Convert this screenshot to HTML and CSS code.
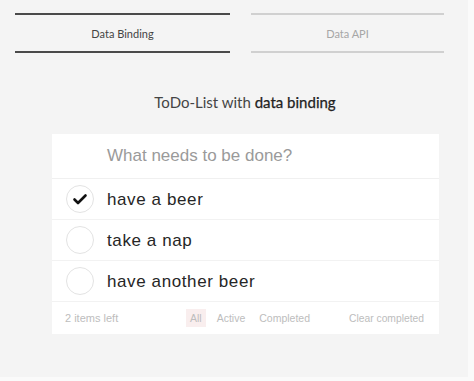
FILE: index.html
```html
<!DOCTYPE html>
<html>
<head>
<meta charset="utf-8">
<link rel="stylesheet" href="styles.css">
</head>
<body>
<div class="page">
  <nav class="tabs">
    <div class="tab tab-active">Data Binding</div>
    <div class="tab tab-inactive">Data API</div>
  </nav>
  <h1 class="title">ToDo-List with <strong>data binding</strong></h1>
  <section class="card">
    <div class="new-row">What needs to be done?</div>
    <ul class="list">
      <li class="item">
        <span class="toggle">
          <svg width="16" height="13" viewBox="0 0 16 13"><path d="M2.5 6.5 L6 10 L13.5 2.5" fill="none" stroke="#111" stroke-width="2.6" stroke-linecap="round" stroke-linejoin="round"/></svg>
        </span>
        <span class="label">have a beer</span>
      </li>
      <li class="item">
        <span class="toggle"></span>
        <span class="label">take a nap</span>
      </li>
      <li class="item">
        <span class="toggle"></span>
        <span class="label">have another beer</span>
      </li>
    </ul>
    <footer class="footer">
      <span class="count">2 items left</span>
      <span class="filters">
        <span class="filter filter-selected">All</span>
        <span class="filter">Active</span>
        <span class="filter">Completed</span>
      </span>
      <span class="clear">Clear completed</span>
    </footer>
  </section>
</div>
</body>
</html>
```

FILE: styles.css
```css
html {
  background: #fafafa;
}
body {
  margin: 0;
  font-family: "Liberation Sans", Arial, sans-serif;
}
.page {
  width: 468px;
  height: 377px;
  background: #f4f4f4;
  box-sizing: border-box;
  padding-top: 13px;
}
.tabs {
  display: flex;
  gap: 21px;
  padding-left: 15px;
}
.tab {
  box-sizing: border-box;
  height: 40px;
  display: flex;
  align-items: center;
  justify-content: center;
  font-family: Lato, sans-serif;
  font-size: 11px;
  padding-top: 1px;
}
.tab-active {
  width: 215px;
  border-top: 2px solid #4a4a4a;
  border-bottom: 2px solid #4a4a4a;
  color: #444;
}
.tab-inactive {
  width: 193px;
  border-top: 2px solid #d0d0d0;
  border-bottom: 2px solid #d0d0d0;
  color: #a6a6a6;
}
.title {
  margin: 0;
  padding-top: 39px;
  height: 42px;
  box-sizing: content-box;
  text-align: center;
  padding-left: 22px;
  font-family: Lato, sans-serif;
  font-weight: 400;
  font-size: 15px;
  line-height: 20px;
  color: #444;
}
.title strong {
  font-weight: 400;
  color: #222;
  -webkit-text-stroke: 0.25px #222;
}
.card {
  margin-left: 52px;
  width: 387px;
  background: #fff;
}
.new-row {
  height: 45px;
  box-sizing: border-box;
  padding-left: 55px;
  display: flex;
  align-items: center;
  font-size: 17px;
  color: #9a9a9a;
  font-weight: 300;
  border-bottom: 1px solid #f0f0f0;
}
.list {
  list-style: none;
  margin: 0;
  padding: 0;
}
.item {
  height: 41px;
  box-sizing: border-box;
  border-bottom: 1px solid #f2f2f2;
  display: flex;
  align-items: center;
  padding-left: 14px;
}
.toggle {
  width: 28px;
  height: 28px;
  box-sizing: border-box;
  border: 1px solid #e3e3e3;
  border-radius: 50%;
  display: flex;
  align-items: center;
  justify-content: center;
  flex: none;
}
.toggle svg {
  margin-top: 1px;
}
.label {
  margin-left: 13px;
  padding-top: 2px;
  font-size: 17px;
  letter-spacing: 0.6px;
  color: #262626;
}
.footer {
  height: 32px;
  display: flex;
  align-items: center;
  padding-left: 13px;
  padding-right: 15px;
  font-size: 11px;
  color: #bdbdbd;
}
.count {
  width: 121px;
}
.filters {
  display: flex;
  gap: 8px;
  flex: 1;
  font-size: 10.5px;
}
.filter {
  padding: 3px 3px;
}
.filter-selected {
  background: #f9eeee;
  padding: 3px 4px;
}
.clear {
  font-size: 10.3px;
  color: #bdbdbd;
}
```
